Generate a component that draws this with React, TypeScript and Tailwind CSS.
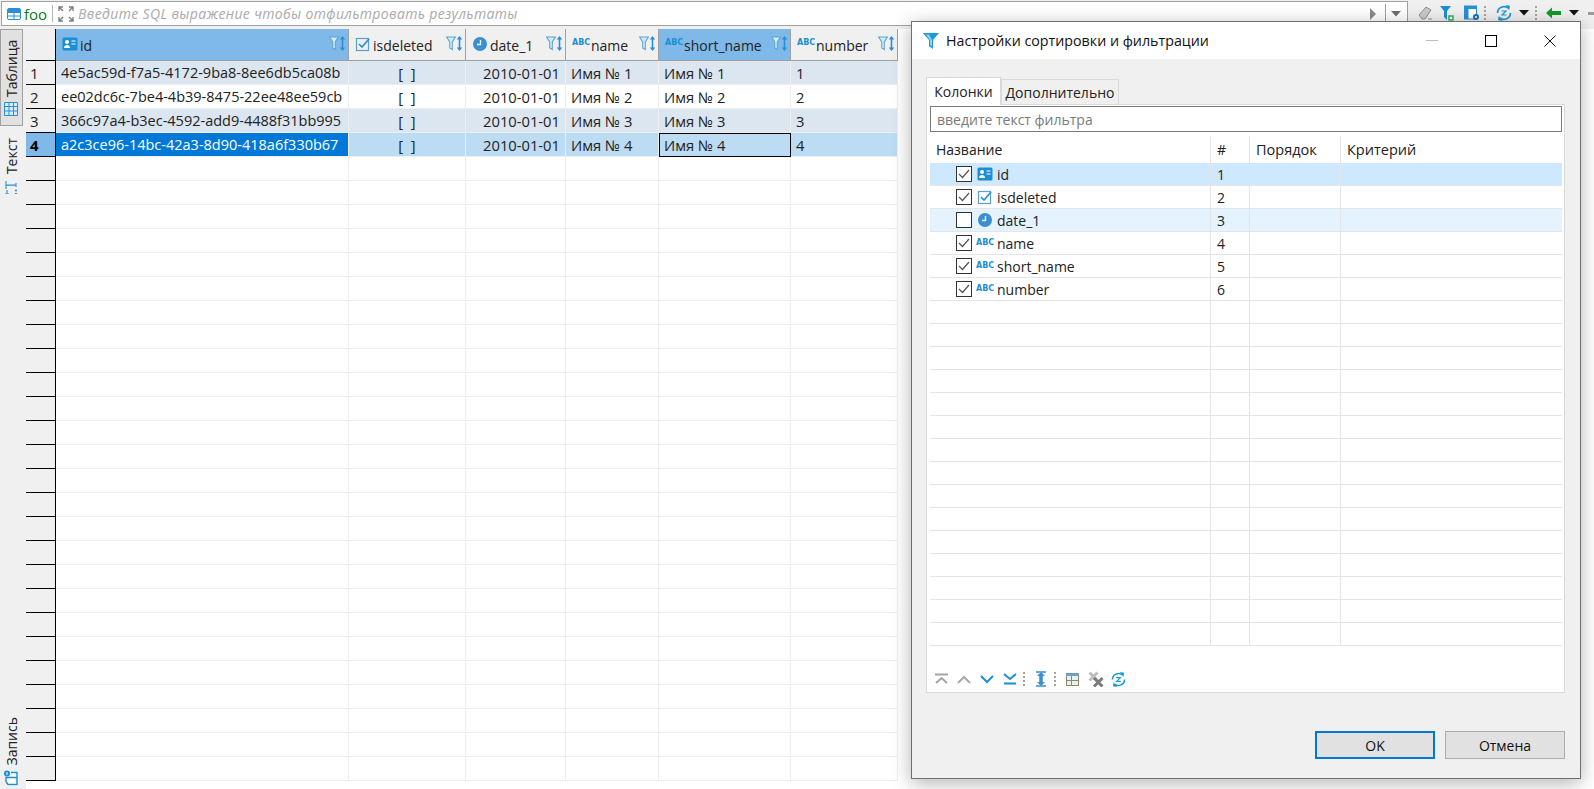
import React from "react";

const BLUE = "#1b8fd2";

const columns = [
  { key: "id", label: "id", width: "w-[293px]", icon: "card" },
  { key: "isdeleted", label: "isdeleted", width: "w-[117px]", icon: "check" },
  { key: "date_1", label: "date_1", width: "w-[100px]", icon: "clock" },
  { key: "name", label: "name", width: "w-[93px]", icon: "abc" },
  { key: "short_name", label: "short_name", width: "w-[132px]", icon: "abc" },
  { key: "number", label: "number", width: "w-[107px]", icon: "abc" },
];

const rows = [
  ["4e5ac59d-f7a5-4172-9ba8-8ee6db5ca08b", "[  ]", "2010-01-01", "Имя № 1", "Имя № 1", "1"],
  ["ee02dc6c-7be4-4b39-8475-22ee48ee59cb", "[  ]", "2010-01-01", "Имя № 2", "Имя № 2", "2"],
  ["366c97a4-b3ec-4592-add9-4488f31bb995", "[  ]", "2010-01-01", "Имя № 3", "Имя № 3", "3"],
  ["a2c3ce96-14bc-42a3-8d90-418a6f330b67", "[  ]", "2010-01-01", "Имя № 4", "Имя № 4", "4"],
];

const dialogRows = [
  { name: "id", icon: "card", on: true, bg: "bg-[#cde8ff]" },
  { name: "isdeleted", icon: "check", on: true, bg: "" },
  { name: "date_1", icon: "clock", on: false, bg: "bg-[#e5f3ff]" },
  { name: "name", icon: "abc", on: true, bg: "" },
  { name: "short_name", icon: "abc", on: true, bg: "" },
  { name: "number", icon: "abc", on: true, bg: "" },
];

function CardIcon() {
  return (
    <svg width="16" height="16" viewBox="0 0 16 16" className="shrink-0">
      <rect x="0.5" y="1.5" width="15" height="13" rx="1.5" fill={BLUE} />
      <circle cx="5" cy="6" r="2" fill="#fff" />
      <path d="M2 12c0-2 1.3-3 3-3s3 1 3 3z" fill="#fff" />
      <path d="M9.5 5h4M9.5 8h4" stroke="#fff" strokeWidth="1.2" />
    </svg>
  );
}

function CheckIcon() {
  return (
    <svg width="16" height="16" viewBox="0 0 16 16" className="shrink-0">
      <rect x="1.5" y="2.5" width="12" height="12" fill="none" stroke="#5a9fd4" strokeWidth="1.2" />
      <path d="M4 8l3 3 7-8" fill="none" stroke="#2b8fd6" strokeWidth="1.7" />
    </svg>
  );
}

function ClockIcon() {
  return (
    <svg width="16" height="16" viewBox="0 0 16 16" className="shrink-0">
      <circle cx="8" cy="8" r="7" fill="#3a8fd0" />
      <path d="M8.5 4v4.5H5" fill="none" stroke="#fff" strokeWidth="1.3" />
    </svg>
  );
}

function AbcIcon() {
  return (
    <span className="inline-block w-[17px] shrink-0 text-[8px] leading-[10px] font-bold text-[#1b8fd2] font-['DejaVu_Sans',sans-serif]">
      ABC
    </span>
  );
}

function TypeIcon({ type }: { type: string }) {
  if (type === "card") return <CardIcon />;
  if (type === "check") return <CheckIcon />;
  if (type === "clock") return <ClockIcon />;
  return <AbcIcon />;
}

function FilterSort() {
  return (
    <svg width="17" height="15" viewBox="0 0 17 15" className="shrink-0">
      <path d="M.6 1h8.8L6.3 6v7.5L3.7 12V6z" fill="#d4ebf7" stroke="#5aa5cf" strokeWidth="1.1" />
      <path d="M13.5 0l-2.8 3.6h5.6zM13.5 15l-2.8-3.6h5.6z" fill="#2b8fd6" />
      <path d="M13.5 3v9" stroke="#2b8fd6" strokeWidth="1.6" />
    </svg>
  );
}

function Dots() {
  return (
    <svg width="3" height="16" viewBox="0 0 3 16" className="shrink-0">
      <path d="M0 1h2v2H0zM0 5h2v2H0zM0 9h2v2H0zM0 13h2v2H0z" fill="#a8a49a" />
    </svg>
  );
}

function SyncIcon({ size = 16 }: { size?: number }) {
  return (
    <svg width={size} height={size} viewBox="0 0 16 16" className="shrink-0">
      <path d="M1.5 8a6.5 6.5 0 0 1 10.5-5M14.5 8a6.5 6.5 0 0 1-10.5 5" fill="none" stroke="#1b9ad6" strokeWidth="1.7" />
      <path d="M9.5 0l4.5.8-.8 4.4zM6.5 16L2 15.2l.8-4.4z" fill="#1b9ad6" />
      <path d="M5.5 6h4.5L6 10h4.5" fill="none" stroke="#1b9ad6" strokeWidth="1.2" />
    </svg>
  );
}

function Caret({ color = "#111" }: { color?: string }) {
  return (
    <svg width="10" height="6" viewBox="0 0 10 6" className="shrink-0">
      <path d="M0 0h10L5 5.5z" fill={color} />
    </svg>
  );
}

function TopBar() {
  return (
    <div className="flex h-[29px] items-start bg-[#f0f0f0] pt-px">
      <div className="ml-px flex h-[25px] w-[1407px] items-center border border-[#a0a0a0] bg-white">
        <svg width="14" height="12" viewBox="0 0 14 12" className="ml-[5px] shrink-0">
          <rect x="0.5" y="0.5" width="13" height="11" rx="1.5" fill="#fff" stroke="#2b8fd6" />
          <path d="M0.5 2a1.5 1.5 0 0 1 1.5-1.5h10A1.5 1.5 0 0 1 13.5 2v3h-13z" fill="#2b8fd6" />
          <path d="M7 5v6.5M0.5 8h13" stroke="#2b8fd6" />
        </svg>
        <span className="ml-[3px] text-[15px] leading-5 text-[#0a7a1e]">foo</span>
        <div className="ml-[5px] h-[17px] w-px bg-[#b5b5b5]" />
        <svg width="16" height="16" viewBox="0 0 16 16" className="ml-[5px] shrink-0">
          <path d="M1 5V1h4M1 1l4 4M11 1h4v4M15 1l-4 4M1 11v4h4M1 15l4-4M15 11v4h-4M15 15l-4-4" fill="none" stroke="#7a7a7a" strokeWidth="1.3" />
        </svg>
        <span className="ml-[4px] text-[14px] italic tracking-[0.35px] text-[#a9a9a9]">
          Введите SQL выражение чтобы отфильтровать результаты
        </span>
        <div className="ml-auto flex items-center">
          <svg width="8" height="12" viewBox="0 0 8 12" className="shrink-0">
            <path d="M1 0l6 6-6 6z" fill="#8a8a8a" />
          </svg>
          <div className="ml-[8px] h-[19px] w-px bg-[#a0a0a0]" />
          <div className="ml-[5px] mr-[6px]">
            <Caret color="#6f6f6f" />
          </div>
        </div>
      </div>
      <div className="ml-[10px] flex h-[24px] items-center">
        <svg width="16" height="16" viewBox="0 0 16 16" className="shrink-0">
          <path d="M1 10l7-8 5 3-6 9H4z" fill="#c9c9c9" stroke="#8d8d8d" />
          <path d="M10 14h4" stroke="#8d8d8d" />
        </svg>
        <svg width="14" height="16" viewBox="0 0 14 16" className="ml-[6px] shrink-0">
          <path d="M0 1h11L7 6v9l-3-3V6z" fill="#1b8fd2" />
          <rect x="9" y="11" width="4" height="4" fill="#fff" stroke="#16a34a" strokeWidth="1.3" />
        </svg>
        <svg width="16" height="16" viewBox="0 0 16 16" className="ml-[10px] shrink-0">
          <rect x="0.5" y="1" width="12" height="13" fill="#fff" stroke="#2b8fd6" />
          <path d="M0.5 1h12v3h-12zM0.5 4h4v10h-4z" fill="#2b8fd6" />
          <circle cx="12" cy="12" r="3" fill="#1b6fb5" />
          <circle cx="12" cy="12" r="1" fill="#fff" />
        </svg>
        <div className="ml-[4px]">
          <Dots />
        </div>
        <div className="ml-[9px]">
          <SyncIcon />
        </div>
        <div className="ml-[7px]">
          <Caret />
        </div>
        <div className="ml-[6px]">
          <Dots />
        </div>
        <svg width="15" height="12" viewBox="0 0 15 12" className="ml-[8px] shrink-0">
          <path d="M0 6l6-5.5V4h9v4H6v3.5z" fill="#0f9d28" />
        </svg>
        <div className="ml-[8px]">
          <Caret />
        </div>
        <div className="ml-[9px] h-[3px] w-[6px] bg-[#9a9a9a]" />
      </div>
    </div>
  );
}

function SideTabs() {
  return (
    <div className="flex w-[26px] shrink-0 flex-col bg-[#f0f0f0]">
      <div className="flex h-[97px] w-[23px] rotate-180 items-center justify-center gap-[5px] border border-[#a0a0a0] bg-[#e1e1e1] [writing-mode:vertical-rl] text-[14px] text-[#222]">
        <svg width="14" height="14" viewBox="0 0 14 14" className="shrink-0 rotate-90">
          <path d="M.5.5h13v13H.5zM5 .5v13M9.5.5v13M.5 5h13M.5 9.5h13" fill="#d7ecfa" stroke="#2b8fd6" />
        </svg>
        <span>Таблица</span>
      </div>
      <div className="mt-[12px] flex w-[23px] rotate-180 items-center gap-[6px] [writing-mode:vertical-rl] text-[14px] text-[#222]">
        <svg width="14" height="14" viewBox="0 0 14 14" className="shrink-0 rotate-90">
          <path d="M0 1v4M0 3h4M1 11l-1 1 1 1M3 11l1 1-1 1M5 2h8M9 2v10M7 12h4" fill="none" stroke="#2b8fd6" strokeWidth="1.1" />
        </svg>
        <span>Текст</span>
      </div>
      <div className="mt-auto mb-[4px] flex w-[23px] rotate-180 items-center gap-[4px] [writing-mode:vertical-rl] text-[14px] text-[#222]">
        <svg width="16" height="16" viewBox="0 0 16 16" className="shrink-0 rotate-90">
          <path d="M1 5l3-2h4v11H1zM1 14h12V8" fill="#fff" stroke="#1b8fd2" strokeWidth="1.4" />
          <circle cx="12" cy="4" r="3" fill="#1b8fd2" />
          <path d="M10.5 4h3" stroke="#fff" />
        </svg>
        <span>Запись</span>
      </div>
    </div>
  );
}

function DataGrid() {
  const empties = Array.from({ length: 26 });
  return (
    <div className="min-w-0 flex-1">
      {/* header */}
      <div className="flex h-[32px]">
        <div className="h-full w-[30px] shrink-0 border-r border-b border-r-black border-b-black bg-[#f0f0f0]" />
        {columns.map((col) => {
          const active = col.key === "id" || col.key === "short_name";
          return (
            <div
              key={col.key}
              className={`flex ${col.width} h-full shrink-0 items-start border-r border-b border-[#a0a0a0] pl-[6px] pt-[7px] ${
                active ? "bg-[#7eb9ea]" : "bg-[#f0f0f0]"
              }`}
            >
              <div className={col.icon === "abc" ? "mt-[2px] flex" : "flex"}>
                <TypeIcon type={col.icon} />
              </div>
              <span className="ml-[2px] text-[14px] leading-[19px] text-[#222]">{col.label}</span>
              <div className="ml-auto mr-[2px]">
                <FilterSort />
              </div>
            </div>
          );
        })}
      </div>
      {/* data */}
      {rows.map((row, i) => (
        <div key={i} className="flex h-[24px]">
          <div
            className={`flex w-[30px] shrink-0 items-center border-r border-b border-r-black border-b-black pl-[4px] pt-px text-[15px] ${
              i === 3 ? "bg-[#7eb9ea] font-bold text-black" : "bg-[#f0f0f0] text-[#222]"
            }`}
          >
            {i + 1}
          </div>
          {row.map((val, j) => {
            let bg = i % 2 === 0 ? "bg-[#dce6f1]" : "bg-white";
            if (i === 3) bg = "bg-[#bcdcf4]";
            if (i === 3 && j === 0) bg = "bg-[#0078d7] text-white";
            const sel = i === 3 && j === 4;
            let align = sel ? "pl-[4px]" : "pl-[5px]";
            if (j === 1) align = "justify-center";
            if (j === 2) align = "justify-center pl-[12px]";
            const size = j === 0 ? "text-[14.5px]" : "text-[14.75px]";
            return (
              <div
                key={j}
                className={`flex ${columns[j].width} h-full shrink-0 items-center whitespace-pre border-r border-b ${size} ${align} ${bg} ${
                  sel ? "border-l border-t border-black" : "border-[#eeeeee] pt-px"
                } ${i === 3 && j === 0 ? "" : "text-[#222]"}`}
              >
                {val}
              </div>
            );
          })}
        </div>
      ))}
      {empties.map((_, i) => (
        <div key={i} className="flex h-[24px]">
          <div className="w-[30px] shrink-0 border-r border-b border-r-black border-b-black bg-[#f0f0f0]" />
          {columns.map((col) => (
            <div key={col.key} className={`${col.width} h-full shrink-0 border-r border-b border-[#eeeeee]`} />
          ))}
        </div>
      ))}
    </div>
  );
}

function DialogCheck({ on }: { on: boolean }) {
  return (
    <div className="flex h-[16px] w-[16px] shrink-0 items-center justify-center border border-[#333] bg-white">
      {on && (
        <svg width="12" height="10" viewBox="0 0 12 10">
          <path d="M1 5l3.5 3.5L11 1" fill="none" stroke="#555" strokeWidth="1.2" />
        </svg>
      )}
    </div>
  );
}

function DialogToolbar() {
  return (
    <div className="ml-[5px] mt-[25px] flex h-[16px] items-center">
      <svg width="13" height="12" viewBox="0 0 13 12" className="shrink-0">
        <path d="M0 1.5h13M1 10l5.5-5 5.5 5" fill="none" stroke="#a3a3a3" strokeWidth="2" />
      </svg>
      <svg width="14" height="9" viewBox="0 0 14 9" className="ml-[9px] shrink-0">
        <path d="M1 8l6-6 6 6" fill="none" stroke="#a9a9a9" strokeWidth="2" />
      </svg>
      <svg width="14" height="9" viewBox="0 0 14 9" className="ml-[9px] shrink-0">
        <path d="M1 1l6 6 6-6" fill="none" stroke="#1b8fd2" strokeWidth="2" />
      </svg>
      <svg width="14" height="12" viewBox="0 0 14 12" className="ml-[9px] shrink-0">
        <path d="M1 1l6 5 6-5M1 10.5h12" fill="none" stroke="#1b8fd2" strokeWidth="2" />
      </svg>
      <div className="ml-[6px]">
        <Dots />
      </div>
      <svg width="12" height="16" viewBox="0 0 12 16" className="ml-[9px] shrink-0">
        <path d="M1 1h10M1 15h10" stroke="#3a8fd0" strokeWidth="1.5" />
        <path d="M6 1L2 5h8zM6 15l-4-4h8z" fill="#3a8fd0" />
        <path d="M6 4v8" stroke="#3a8fd0" strokeWidth="3.5" />
      </svg>
      <div className="ml-[7px]">
        <Dots />
      </div>
      <svg width="13" height="13" viewBox="0 0 13 13" className="ml-[9px] shrink-0">
        <rect x="0.5" y="0.5" width="12" height="12" fill="#e6f1f3" stroke="#8c8766" />
        <path d="M0 .5h13v2.5H0z" fill="#6d9fd8" />
        <path d="M5.5 3v9.5M.5 7.5h12" stroke="#8c8766" />
      </svg>
      <svg width="16" height="16" viewBox="0 0 16 16" className="ml-[9px] shrink-0">
        <path d="M1.5 1.5l8 8M9.5 1.5l-8 8" stroke="#bdbdbd" strokeWidth="3" />
        <path d="M6 7l8.5 8.5M14.5 7L6 15.5" stroke="#7a7a7a" strokeWidth="3" />
      </svg>
      <div className="ml-[7px]">
        <SyncIcon size={15} />
      </div>
    </div>
  );
}

function FilterDialog() {
  const blanks = Array.from({ length: 15 });
  return (
    <div className="absolute left-[911px] top-[21px] flex h-[758px] w-[670px] flex-col border border-[#6f6f6f] bg-[#f0f0f0] shadow-[0_4px_18px_rgba(0,0,0,0.3)]">
      {/* title bar */}
      <div className="flex h-[37px] shrink-0 items-center bg-white">
        <svg width="16" height="18" viewBox="0 0 16 18" className="ml-[11px] shrink-0">
          <path d="M0 1h16l-6 7v9l-4-3V8z" fill="#1b9ad6" />
          <path d="M3 2.5h3L9 8v6l-2-1V8z" fill="#8fd2f2" />
        </svg>
        <span className="ml-[7px] text-[14.25px] text-[#111]">Настройки сортировки и фильтрации</span>
        <div className="ml-auto flex items-center">
          <div className="h-px w-[12px] bg-[#bdbdbd]" />
          <div className="ml-[47px] h-[12px] w-[12px] border border-black" />
          <svg width="12" height="12" viewBox="0 0 12 12" className="ml-[47px] mr-[24px] shrink-0">
            <path d="M.5.5l11 11M11.5.5l-11 11" stroke="#111" />
          </svg>
        </div>
      </div>

      <div className="ml-[14px] mt-[18px] w-[639px]">
        {/* tabs */}
        <div className="flex h-[27px] items-end text-[14px] text-[#222]">
          <div className="relative top-px flex h-[28px] w-[75px] items-center justify-center border border-b-0 border-[#d9d9d9] bg-white">
            Колонки
          </div>
          <div className="flex h-[25px] w-[118px] items-center justify-center border border-b-0 border-[#d9d9d9] bg-[#f0f0f0]">
            Дополнительно
          </div>
        </div>

        {/* panel */}
        <div className="h-[589px] border border-[#d9d9d9] bg-white pl-[3px] pr-[2px] pt-px">
          <div className="flex h-[26px] items-center border border-[#7a7a7a] pl-[6px] text-[14px] text-[#7a7a7a]">
            введите текст фильтра
          </div>

          <div className="mt-[4px] flex h-[27px] items-center text-[14px] text-[#222]">
            <div className="flex h-full w-[281px] items-center border-r border-[#e5e5e5] pl-[6px]">Название</div>
            <div className="flex h-full w-[39px] items-center border-r border-[#e5e5e5] pl-[6px]">#</div>
            <div className="flex h-full w-[91px] items-center border-r border-[#e5e5e5] pl-[6px] text-[14.5px]">Порядок</div>
            <div className="flex h-full flex-1 items-center pl-[6px] text-[14.5px]">Критерий</div>
          </div>

          {dialogRows.map((row, i) => (
            <div key={row.name} className={`flex h-[23px] border-b border-[#e5e5e5] text-[14px] text-[#222] ${row.bg}`}>
              <div className="flex w-[281px] items-center border-r border-[#e5e5e5] pl-[26px]">
                <DialogCheck on={row.on} />
                <div className="ml-[4px] flex w-[17px] justify-center">
                  <TypeIcon type={row.icon} />
                </div>
                <span className="ml-[4px]">{row.name}</span>
              </div>
              <div className="flex w-[39px] items-center border-r border-[#e5e5e5] pl-[6px]">{i + 1}</div>
              <div className="w-[91px] border-r border-[#e5e5e5]" />
              <div className="flex-1" />
            </div>
          ))}
          {blanks.map((_, i) => (
            <div key={i} className="flex h-[23px] border-b border-[#e5e5e5]">
              <div className="w-[281px] border-r border-[#e5e5e5]" />
              <div className="w-[39px] border-r border-[#e5e5e5]" />
              <div className="w-[91px] border-r border-[#e5e5e5]" />
              <div className="flex-1" />
            </div>
          ))}

          <DialogToolbar />
        </div>
      </div>

      {/* buttons */}
      <div className="ml-auto mr-[15px] mt-[38px] flex gap-[10px] text-[14px] text-[#111]">
        <button className="h-[28px] w-[120px] border-2 border-[#0078d7] bg-[#e1e1e1]">OK</button>
        <button className="h-[28px] w-[120px] border border-[#adadad] bg-[#e1e1e1]">Отмена</button>
      </div>
    </div>
  );
}

export default function App() {
  return (
    <div className="relative h-[789px] w-[1594px] overflow-hidden bg-white font-['Open_Sans',sans-serif]">
      <TopBar />
      <div className="flex h-[760px]">
        <SideTabs />
        <DataGrid />
      </div>
      <FilterDialog />
    </div>
  );
}
